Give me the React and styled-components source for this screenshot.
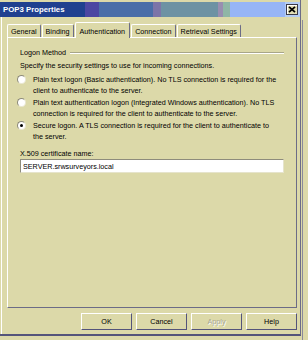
import styled, { createGlobalStyle } from "styled-components";

const GlobalStyle = createGlobalStyle`
  html, body {
    margin: 0;
    padding: 0;
    background: #dcd9a9;
  }
  body {
    font-family: "Liberation Sans", Arial, sans-serif;
    font-size: 7.2px;
    color: #000;
  }
`;

const tabs = ["General", "Binding", "Authentication", "Connection", "Retrieval Settings"];

const options = [
  {
    text: "Plain text logon (Basic authentication). No TLS connection is required for the client to authenticate to the server.",
    checked: false,
  },
  {
    text: "Plain text authentication logon (Integrated Windows authentication). No TLS connection is required for the client to authenticate to the server.",
    checked: false,
  },
  {
    text: "Secure logon. A TLS connection is required for the client to authenticate to the server.",
    checked: true,
  },
];

const App = () => {
  return (
    <>
      <GlobalStyle />
      <Page>
        <Dialog>
          <TitleBar>
            <Title>POP3 Properties</Title>
            <CloseBtn>
              <CloseIcon width="8" height="7" viewBox="0 0 8 7">
                <path d="M1 0.8 L7 6.2 M7 0.8 L1 6.2" stroke="#000" strokeWidth="1.8" />
              </CloseIcon>
            </CloseBtn>
          </TitleBar>
          <Body>
            <TabRow>
              {tabs.map((t) => (
                <Tab key={t} $active={t === "Authentication"}>
                  {t}
                </Tab>
              ))}
            </TabRow>
            <Panel>
              <GroupHead>
                <span>Logon Method</span>
                <Rule />
              </GroupHead>
              <Intro>Specify the security settings to use for incoming connections.</Intro>
              <OptionList>
                {options.map((o, i) => (
                  <Option key={i}>
                    <Radio $checked={o.checked} />
                    <OptionText>{o.text}</OptionText>
                  </Option>
                ))}
              </OptionList>
              <FieldLabel>X.509 certificate name:</FieldLabel>
              <TextBox>SERVER.srwsurveyors.local</TextBox>
            </Panel>
            <ButtonRow>
              <Button>OK</Button>
              <Button>Cancel</Button>
              <Button $disabled>Apply</Button>
              <Button>Help</Button>
            </ButtonRow>
          </Body>
        </Dialog>
        <BackWindow />
      </Page>
    </>
  );
};

export default App;

const Page = styled.div`
  display: flex;
  width: 308px;
  height: 340px;
  overflow: hidden;
`;

const Dialog = styled.div`
  width: 301px;
  height: 336px;
  padding-top: 2px;
  box-sizing: border-box;
  border-right: 1px solid #6c6c86;
  border-bottom: 2px solid #54547a;
  display: flex;
  flex-direction: column;
  flex-shrink: 0;
`;

const TitleBar = styled.div`
  height: 15px;
  display: flex;
  align-items: center;
  justify-content: space-between;
  padding: 0 1px 0 3px;
  background: linear-gradient(
    to right,
    #20408f 0px,
    #20408f 85px,
    #4c46a2 85px,
    #4c46a2 99px,
    #4a6ea8 99px,
    #4a6ea8 153px,
    #7c75a8 153px,
    #7c75a8 161px,
    #6d92a3 161px,
    #6d92a3 218px,
    #988eb0 218px,
    #988eb0 223px,
    #8fb6a6 223px,
    #8fb6a6 230px,
    #97b5f6 230px,
    #97b5f6 285px,
    #b4cdf4 285px
  );
`;

const Title = styled.span`
  color: #fff;
  font-weight: bold;
  font-size: 7.8px;
`;

const CloseBtn = styled.div`
  width: 12px;
  height: 11px;
  margin-right: 1px;
  flex-shrink: 0;
  box-sizing: border-box;
  display: flex;
  align-items: center;
  justify-content: center;
  background: #e2dfb6;
  border: 1px solid #3a3a48;
  box-shadow: inset 1px 1px 0 #fff;
`;

const CloseIcon = styled.svg`
  display: block;
`;

const Body = styled.div`
  flex: 1;
  margin-left: 1px;
  border-left: 1px solid #fff;
  padding: 5px 3px 0 5px;
  display: flex;
  flex-direction: column;
`;

const TabRow = styled.div`
  height: 15px;
  display: flex;
  align-items: flex-end;
  gap: 1px;
  position: relative;
  z-index: 1;
`;

const Tab = styled.div`
  height: ${(p) => (p.$active ? "16px" : "13px")};
  margin-bottom: ${(p) => (p.$active ? "-1px" : "0")};
  padding: ${(p) => (p.$active ? "1px 4px 0" : "1px 3px 0")};
  box-sizing: border-box;
  display: flex;
  align-items: center;
  background: #dcd9a9;
  border: 1px solid;
  border-bottom: none;
  border-color: #fff #6c6c86 #6c6c86 #fff;
  border-radius: 2px 2px 0 0;
  white-space: nowrap;
`;

const Panel = styled.div`
  height: 271px;
  box-sizing: border-box;
  border: 1px solid;
  border-color: #fff #6c6c86 #6c6c86 #fff;
  padding: 9px 12px 0 12px;
  display: flex;
  flex-direction: column;
`;

const GroupHead = styled.div`
  display: flex;
  align-items: center;
  gap: 4px;
  line-height: 11px;
`;

const Rule = styled.div`
  flex: 1;
  height: 0;
  border-top: 1px solid #a8a688;
  border-bottom: 1px solid #fff;
`;

const Intro = styled.div`
  margin-top: 2px;
  line-height: 11px;
`;

const OptionList = styled.div`
  margin-top: 3px;
  display: flex;
  flex-direction: column;
  gap: 1px;
`;

const Option = styled.div`
  display: flex;
  align-items: flex-start;
  gap: 7px;
  margin-left: -3px;
  padding-right: 6px;
`;

const Radio = styled.div`
  width: 9px;
  height: 9px;
  margin-top: 1px;
  flex-shrink: 0;
  box-sizing: border-box;
  border-radius: 50%;
  background: #fff;
  border: 1px solid;
  border-color: #8c8a78 #e8e6d0 #e8e6d0 #8c8a78;
  display: flex;
  align-items: center;
  justify-content: center;
  &::after {
    content: "";
    display: ${(p) => (p.$checked ? "block" : "none")};
    width: 3px;
    height: 3px;
    border-radius: 50%;
    background: #000;
  }
`;

const OptionText = styled.div`
  line-height: 11px;
`;

const FieldLabel = styled.div`
  margin-top: 6px;
  line-height: 11px;
`;

const TextBox = styled.div`
  height: 14px;
  box-sizing: border-box;
  background: #fff;
  border: 1px solid;
  border-color: #8e8c7c #e6e4cc #e6e4cc #8e8c7c;
  padding-left: 2px;
  display: flex;
  align-items: center;
`;

const ButtonRow = styled.div`
  margin-top: 5px;
  display: flex;
  justify-content: flex-end;
  gap: 4px;
`;

const Button = styled.div`
  width: 51px;
  height: 17px;
  box-sizing: border-box;
  display: flex;
  align-items: center;
  justify-content: center;
  border: 1px solid;
  border-color: #fff #54547a #54547a #fff;
  color: ${(p) => (p.$disabled ? "#a8a690" : "#000")};
  text-shadow: ${(p) => (p.$disabled ? "1px 1px 0 #fff" : "none")};
`;

const BackWindow = styled.div`
  flex: 1;
  margin-top: 20px;
  border-left: 1px solid #8a8a9a;
  margin-left: 1px;
`;
